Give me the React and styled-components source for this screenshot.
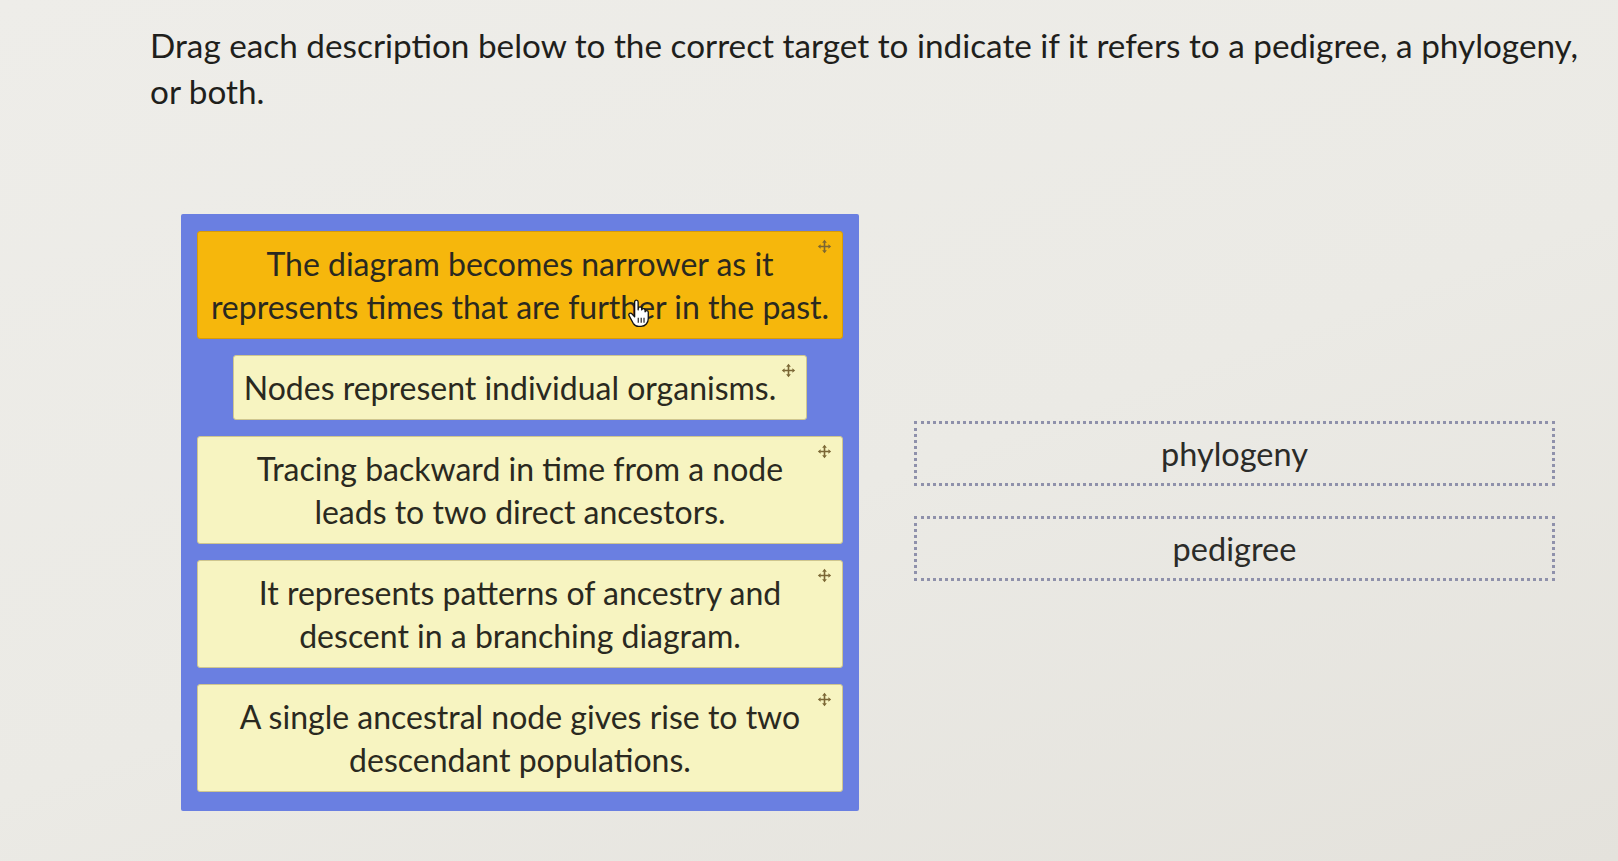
import React from 'react';
import styled, {createGlobalStyle} from 'styled-components';

const Global = createGlobalStyle`
  html, body { margin: 0; padding: 0; }
  body {
    background: linear-gradient(160deg, #eeede9 0%, #ebeae5 55%, #e4e2dc 100%);
    font-family: Lato, "Noto Sans", sans-serif;
    color: #27261f;
    min-height: 861px;
  }
`

const Page = styled.div({
  padding: '22px 30px 40px 150px',
  boxSizing: 'border-box',
  width: '1618px',
  height: '861px'
})

const Prompt = styled.h1({
  margin: 0,
  fontSize: '33.3px',
  fontWeight: 400,
  lineHeight: '46px',
  color: '#1f1f1c',
  whiteSpace: 'nowrap'
})

const Workspace = styled.div({
  display: 'flex',
  alignItems: 'flex-start',
  marginTop: '100px',
  paddingLeft: '31px'
})

const Bank = styled.div({
  width: '678px',
  boxSizing: 'border-box',
  background: '#6a7fe1',
  padding: '17px 15px 19px',
  display: 'flex',
  flexDirection: 'column',
  alignItems: 'center',
  gap: '16px',
  borderRadius: '2px'
})

const Card = styled.div`
  position: relative;
  box-sizing: border-box;
  max-width: 646px;
  width: ${p => (p.$compact ? 'auto' : '100%')};
  padding: ${p => (p.$compact ? '10px 30px 10px 10px' : '10px 12px')};
  background: ${p => (p.$active ? '#f6b70c' : '#f7f4c1')};
  border: 1px solid ${p => (p.$active ? '#d89c06' : '#cfc68f')};
  border-radius: 3px;
  text-align: center;
  font-size: 32px;
  line-height: 43px;
  white-space: nowrap;
  color: #2a2920;
  cursor: move;
`

const Grip = styled.svg({
  position: 'absolute',
  top: '7px',
  right: '10px',
  width: '15px',
  height: '15px'
})

const Pointer = styled.svg({
  position: 'absolute',
  left: '429px',
  top: '67px',
  width: '24px',
  height: '30px'
})

const Targets = styled.div({
  marginLeft: '55px',
  marginTop: '207px',
  width: '641px',
  display: 'flex',
  flexDirection: 'column',
  gap: '30px'
})

const Target = styled.div({
  height: '65px',
  boxSizing: 'border-box',
  border: '3px dotted #8f91ab',
  display: 'flex',
  alignItems: 'center',
  justifyContent: 'center',
  fontSize: '32.5px',
  color: '#2b2b28'
})

// four-way move handle in the corner of each draggable card
function MoveIcon() {
  return (
    <Grip viewBox="0 0 14 14">
      <path d="M7 3v8M3 7h8" stroke="#7a6634" strokeWidth="1.5"/>
      <path d="M7 .8 9.2 3.4H4.8zM7 13.2 4.8 10.6h4.4zM.8 7l2.6-2.2v4.4zM13.2 7l-2.6 2.2V4.8z" fill="#7a6634"/>
    </Grip>
  )
}

function HandCursor() {
  return (
    <Pointer viewBox="0 0 22 27">
      <path
        d="M7 2.5c0-1 .7-1.7 1.6-1.7s1.6.7 1.6 1.7v7.2l.2-1.3c.1-.9.8-1.4 1.6-1.4s1.5.7 1.5 1.6v1.2c.2-.8.9-1.2 1.6-1.2.8 0 1.5.7 1.5 1.6v1.3c.2-.7.8-1.1 1.5-1.1.8 0 1.4.7 1.4 1.6v5.6c0 4-2.6 7.2-6.6 7.2h-2.2c-2.3 0-3.8-1-5-2.8L2 15.2c-.6-.8-.4-1.8.4-2.3.7-.4 1.6-.2 2.1.4L7 16V2.5z"
        fill="#fff" stroke="#111" strokeWidth="1.2" strokeLinejoin="round"/>
      <path d="M10.3 17v4.5M13 17v4.5M15.6 17v4.5" stroke="#111" strokeWidth="1"/>
    </Pointer>
  )
}

const descriptions = [
  {lines: ['The diagram becomes narrower as it', 'represents times that are further in the past.'], active: true},
  {lines: ['Nodes represent individual organisms.'], compact: true},
  {lines: ['Tracing backward in time from a node', 'leads to two direct ancestors.']},
  {lines: ['It represents patterns of ancestry and', 'descent in a branching diagram.']},
  {lines: ['A single ancestral node gives rise to two', 'descendant populations.']}
]

export default function App() {
  return (
    <Page>
      <Global/>
      <Prompt>
        Drag each description below to the correct target to indicate if it refers to a pedigree, a phylogeny,<br/>
        or both.
      </Prompt>
      <Workspace>
        <Bank>
          {descriptions.map((d, i) => (
            <Card key={i} $active={d.active} $compact={d.compact}>
              {d.lines.map((l, j) => (
                <React.Fragment key={j}>{j > 0 && <br/>}{l}</React.Fragment>
              ))}
              <MoveIcon/>
              {d.active && <HandCursor/>}
            </Card>
          ))}
        </Bank>
        <Targets>
          <Target>phylogeny</Target>
          <Target>pedigree</Target>
        </Targets>
      </Workspace>
    </Page>
  );
}
